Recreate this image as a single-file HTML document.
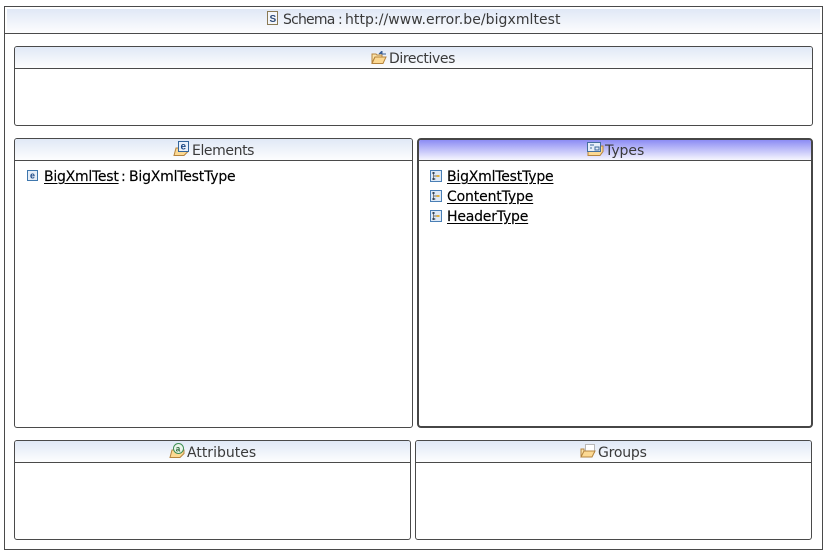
<!DOCTYPE html>
<html><head><meta charset="utf-8"><style>
html,body{margin:0;padding:0;background:#fff;width:826px;height:553px;overflow:hidden}
body{position:relative;font-family:"DejaVu Sans","Liberation Sans",sans-serif;font-size:14px;color:#000}
div,svg,span.t{position:absolute;box-sizing:border-box}
.p{border:1px solid #4a4a4a;border-radius:3px;background:#fff}
.h{left:0;right:0;top:0;height:22px;border-bottom:1px solid #4a4a4a;background:linear-gradient(#e0e8f6,#fdfdfe);border-radius:2px 2px 0 0}
.t{white-space:nowrap;color:#3a3a3a;line-height:16px}
.i{color:#000;letter-spacing:-.2px;-webkit-text-stroke:.15px #000}
.i u{text-underline-offset:2px}
</style></head><body>
<div style="left:4px;top:6px;width:819px;height:544px;border:1px solid #4a4a4a"></div>
<div style="left:5px;top:33px;width:817px;height:1px;background:#4a4a4a"></div>
<div style="left:7px;top:9px;width:813px;height:24px;background:linear-gradient(#e0e8f6,#fdfdfe)"></div>
<svg style="left:267px;top:11px" width="12" height="15" viewBox="0 0 12 15"><rect x=".5" y=".5" width="10" height="13" fill="#f4f6fa" stroke="#8a7a55"/><text x="2.500" y="11" font-family="Liberation Sans" font-weight="bold" font-size="10" fill="#2d4a78">S</text></svg>
<span class="t" style="left:283px;top:12px;letter-spacing:-.8px">Schema</span>
<span class="t" style="left:338px;top:12px">:</span>
<span class="t" style="left:345px;top:12px;letter-spacing:.05px">http://www.error.be/bigxmltest</span>

<div class="p" style="left:14px;top:46px;width:799px;height:80px"><div class="h"></div></div>
<svg style="left:371px;top:51px" width="16" height="14" viewBox="0 0 16 14"><path d="M1 3h4l1 1h5v2H4L1 12z" fill="#fbe3ab" stroke="#b5843e"/><path d="M4 6h11l-3 6.500H1z" fill="#fcd993" stroke="#b5843e"/><path d="M8 3l3-3v3h4" fill="#3a5f95" stroke="#3a5f95"/></svg>
<span class="t" style="left:389px;top:51px;letter-spacing:-.4px">Directives</span>

<div class="p" style="left:14px;top:138px;width:399px;height:290px"><div class="h"></div></div>
<svg style="left:173px;top:141px" width="17" height="16" viewBox="0 0 17 16"><path d="M3 7L1 14.500h10l4-4V7z" fill="#fcd993" stroke="#b5843e"/><rect x="5.500" y=".5" width="10" height="10" fill="#eaf1fa" stroke="#33659c"/><text x="7.500" y="8.500" font-family="Liberation Sans" font-weight="bold" font-size="10" fill="#1f4a85">e</text></svg>
<span class="t" style="left:192px;top:143px;letter-spacing:-.4px">Elements</span>
<svg style="left:27px;top:170px" width="12" height="12" viewBox="0 0 12 12"><rect x=".5" y=".5" width="10" height="10" fill="#e6eef8" stroke="#3f77ad"/><text x="3" y="8.500" font-family="Liberation Sans" font-weight="bold" font-size="9" fill="#1f4a85">e</text></svg>
<span class="t i" style="left:44px;top:169px;letter-spacing:-.25px"><u>BigXmlTest</u></span>
<span class="t i" style="left:121px;top:169px">:</span>
<span class="t i" style="left:129px;top:169px">BigXmlTestType</span>

<div class="p" style="left:417px;top:138px;width:396px;height:290px;border:2px solid #464646;border-radius:4px"><div class="h" style="height:21px;background:linear-gradient(#8c8cf4,#f6f6fe)"></div></div>
<svg style="left:587px;top:142px" width="17" height="15" viewBox="0 0 17 15"><path d="M1 4L1 13.500h12l3-4V4z" fill="#fcd993" stroke="#b5843e"/><rect x=".5" y=".5" width="13" height="9" fill="#e6eef8" stroke="#456f9e"/><path d="M3 3h4M3 6h2M8 5h4v3H8z" stroke="#3f6a9c" fill="none"/></svg>
<span class="t" style="left:605px;top:143px;letter-spacing:-.05px">Types</span>
<svg style="left:430px;top:170px" width="12" height="12" viewBox="0 0 12 12"><rect x=".5" y=".5" width="11" height="11" fill="#dfeaf7" stroke="#4a7fb5"/><path d="M3.500 3v6h2M3.500 6h3" stroke="#777" fill="none"/><rect x="2.500" y="2" width="2" height="2" fill="#345"/><rect x="2.500" y="8" width="2" height="2" fill="#345"/><rect x="6.500" y="5" width="3" height="2" fill="#e0b040"/></svg>
<svg style="left:430px;top:190px" width="12" height="12" viewBox="0 0 12 12"><rect x=".5" y=".5" width="11" height="11" fill="#dfeaf7" stroke="#4a7fb5"/><path d="M3.500 3v6h2M3.500 6h3" stroke="#777" fill="none"/><rect x="2.500" y="2" width="2" height="2" fill="#345"/><rect x="2.500" y="8" width="2" height="2" fill="#345"/><rect x="6.500" y="5" width="3" height="2" fill="#e0b040"/></svg>
<svg style="left:430px;top:210px" width="12" height="12" viewBox="0 0 12 12"><rect x=".5" y=".5" width="11" height="11" fill="#dfeaf7" stroke="#4a7fb5"/><path d="M3.500 3v6h2M3.500 6h3" stroke="#777" fill="none"/><rect x="2.500" y="2" width="2" height="2" fill="#345"/><rect x="2.500" y="8" width="2" height="2" fill="#345"/><rect x="6.500" y="5" width="3" height="2" fill="#e0b040"/></svg>
<span class="t i" style="left:447px;top:169px"><u>BigXmlTestType</u></span>
<span class="t i" style="left:447px;top:189px;letter-spacing:-.15px"><u>ContentType</u></span>
<span class="t i" style="left:447px;top:209px"><u>HeaderType</u></span>

<div class="p" style="left:14px;top:440px;width:397px;height:100px"><div class="h"></div></div>
<svg style="left:169px;top:443px" width="17" height="16" viewBox="0 0 17 16"><path d="M3 7L1 14.500h10l4-4V7z" fill="#fcd993" stroke="#b5843e"/><circle cx="9.500" cy="5.500" r="5" fill="#e9f5ea" stroke="#3f8f55"/><text x="6.800" y="8.500" font-family="Liberation Sans" font-weight="bold" font-size="8" fill="#2a6a3c">a</text></svg>
<span class="t" style="left:187px;top:445px">Attributes</span>

<div class="p" style="left:415px;top:440px;width:397px;height:100px"><div class="h"></div></div>
<svg style="left:580px;top:444px" width="16" height="14" viewBox="0 0 16 14"><rect x="5.500" y=".5" width="9" height="8" fill="#fff" stroke="#b8b8b8"/><path d="M1 5h3v7H1z" fill="#fbe3ab" stroke="#b5843e"/><path d="M4 7h11l-3 6H1z" fill="#fcd993" stroke="#b5843e"/></svg>
<span class="t" style="left:598px;top:445px;letter-spacing:-.2px">Groups</span>
</body></html>
